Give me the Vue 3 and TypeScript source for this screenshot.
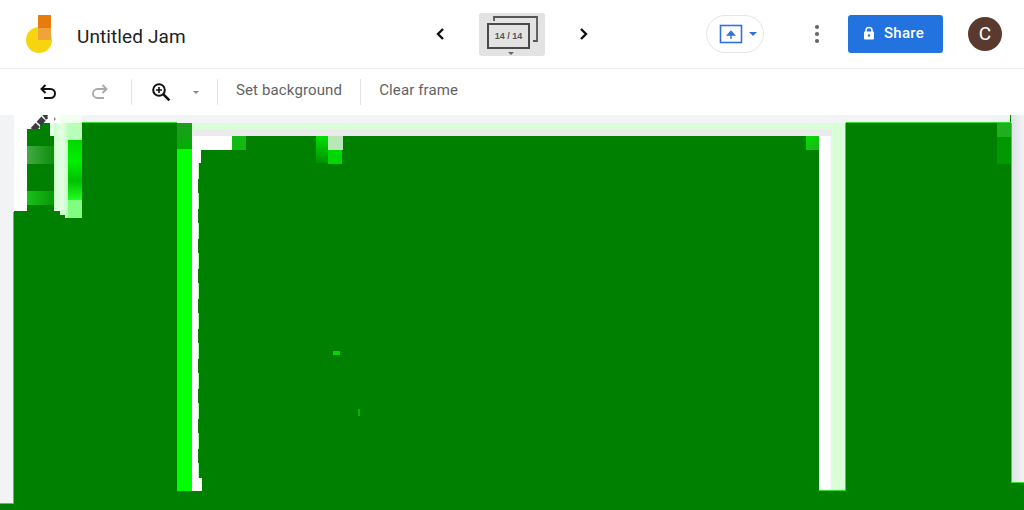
<template>
  <div class="page">
    <header class="topbar">
      <div class="brand">
        <svg class="logo" width="28" height="40" viewBox="0 0 28 40">
          <circle cx="14" cy="26" r="13" fill="#f6d50f" />
          <rect x="13" y="1" width="13" height="13" fill="#e67c0b" />
          <rect x="13" y="14" width="13" height="12" fill="#f0a33a" />
        </svg>
        <span class="title">Untitled Jam</span>
      </div>

      <div class="pager">
        <svg width="12" height="14" viewBox="0 0 12 14">
          <path d="M9 2 4 7l5 5" fill="none" stroke="#111" stroke-width="2.4" />
        </svg>
        <button class="frames">
          <svg class="frames-back" width="52" height="30" viewBox="0 0 52 30">
            <path d="M7 6V2h43v24h-4" fill="none" stroke="#555" stroke-width="1.8" />
          </svg>
          <span class="frames-front">14 / 14</span>
          <span class="frames-caret"></span>
        </button>
        <svg width="12" height="14" viewBox="0 0 12 14">
          <path d="M3 2l5 5-5 5" fill="none" stroke="#111" stroke-width="2.4" />
        </svg>
      </div>

      <div class="actions">
        <button class="present">
          <svg width="24" height="20" viewBox="0 0 24 20">
            <rect x="1.5" y="1.5" width="21" height="17" fill="none" stroke="#2f73d8" stroke-width="1.6" />
            <path d="M12 15V9M8.6 11 12 7.2 15.4 11Z" fill="#2f73d8" stroke="#2f73d8" stroke-width="1.4" />
          </svg>
          <span class="present-caret"></span>
        </button>
        <svg class="more" width="6" height="20" viewBox="0 0 6 20">
          <circle cx="3" cy="3" r="2.1" fill="#666" />
          <circle cx="3" cy="10" r="2.1" fill="#666" />
          <circle cx="3" cy="17" r="2.1" fill="#666" />
        </svg>
        <button class="share">
          <svg width="12" height="14" viewBox="0 0 12 14">
            <path d="M3 6V4.4a3 3 0 0 1 6 0V6" fill="none" stroke="#fff" stroke-width="1.5" />
            <rect x="1" y="5.5" width="10" height="8" rx="1" fill="#fff" />
            <circle cx="6" cy="9.5" r="1.2" fill="#2272e0" />
          </svg>
          <span>Share</span>
        </button>
        <div class="avatar">C</div>
      </div>
    </header>

    <nav class="toolbar">
      <svg class="undo" width="20" height="18" viewBox="0 0 20 18">
        <path d="M6.5 2 2.5 6l4 4M3 6h8.5a4.5 4.5 0 0 1 0 9H5" fill="none" stroke="#111" stroke-width="2" />
      </svg>
      <svg class="redo" width="20" height="18" viewBox="0 0 20 18">
        <path d="M13.5 2l4 4-4 4M17 6H8.5a4.5 4.5 0 0 0 0 9H15" fill="none" stroke="#aaa" stroke-width="1.9" />
      </svg>
      <span class="sep sep-first"></span>
      <svg class="zoom" width="20" height="20" viewBox="0 0 20 20">
        <circle cx="8" cy="8" r="5.8" fill="none" stroke="#111" stroke-width="2" />
        <path d="M12.4 12.4 18.4 18.4" stroke="#111" stroke-width="2.6" />
        <path d="M8 5v6M5 8h6" stroke="#111" stroke-width="1.6" />
      </svg>
      <span class="zoom-caret"></span>
      <span class="sep sep-zoom"></span>
      <span class="tool-text">Set background</span>
      <span class="sep sep-text"></span>
      <span class="tool-text">Clear frame</span>
    </nav>

    <main class="stage">
      <div
        v-for="(b, i) in blocks"
        :key="i"
        class="block"
        :style="blockStyle(b)"
      ></div>
      <svg class="pen" width="26" height="14" viewBox="0 0 26 14">
        <path d="M3 15 16 1" stroke="#3b3b40" stroke-width="6" stroke-dasharray="7 1.5" />
        <path d="M13 0h5l-2 5z" fill="#3b3b40" />
        <path d="M24 2l2 2-2 2z" fill="#888" />
      </svg>
    </main>
  </div>
</template>

<script setup lang="ts">
interface Block {
  x: number
  y: number
  w: number
  h: number
  bg: string
}

const STAGE_TOP = 115
const GREEN = '#008000'
const LIME = '#00ff00'
const EDGE = '#30e030'
const PALE = '#d8ffd8'
const GREY = '#f1f3f4'

// page coordinates, painted in order over the green stage
const blocks: Block[] = [
  // outer grey edges
  { x: 0, y: 115, w: 14, h: 389, bg: GREY },
  { x: 13, y: 212, w: 1, h: 292, bg: EDGE },
  { x: 0, y: 503, w: 14, h: 1, bg: EDGE },
  { x: 14, y: 115, w: 996, h: 8, bg: GREY },
  { x: 82, y: 122, w: 95, h: 1, bg: EDGE },
  { x: 846, y: 122, w: 165, h: 1, bg: EDGE },
  { x: 1011, y: 115, w: 13, h: 367, bg: 'linear-gradient(90deg,#dfe2e6,#f1f3f4)' },
  { x: 1011, y: 123, w: 1, h: 360, bg: EDGE },
  { x: 1011, y: 482, w: 13, h: 1, bg: EDGE },

  // top left white corner with the smeared blocks
  { x: 14, y: 115, w: 46, h: 96, bg: '#fff' },
  { x: 54, y: 123, w: 14, h: 87, bg: 'linear-gradient(90deg,#c8ffc8,#e8ffe8 50%,#c0ffc0)' },
  { x: 60, y: 210, w: 8, h: 5, bg: '#c8ffc8' },
  { x: 65, y: 215, w: 3, h: 3, bg: '#c8ffc8' },
  { x: 60, y: 115, w: 22, h: 8, bg: '#f0fff0' },
  { x: 68, y: 123, w: 14, h: 17, bg: '#b8ffb8' },
  { x: 27, y: 129, w: 27, h: 82, bg: GREEN },
  { x: 40, y: 123, w: 10, h: 6, bg: GREEN },
  { x: 50, y: 123, w: 4, h: 13, bg: '#e8ffe8' },
  { x: 27, y: 146, w: 27, h: 18, bg: 'linear-gradient(90deg,#45a845,#0a900a)' },
  { x: 27, y: 191, w: 27, h: 14, bg: 'linear-gradient(90deg,#18c018,#0a980a)' },
  { x: 68, y: 140, w: 14, h: 60, bg: 'linear-gradient(180deg,#00d800,#00f000 35%,#00c000 68%,#20ff20)' },
  { x: 68, y: 200, w: 14, h: 18, bg: '#80ff80' },

  // frame columns beside the big green area
  { x: 177, y: 123, w: 15, h: 26, bg: 'linear-gradient(180deg,#1f9a1f,#00b000)' },
  { x: 177, y: 149, w: 15, h: 342, bg: LIME },

  // top of the frame
  { x: 192, y: 123, w: 640, h: 7, bg: PALE },
  { x: 192, y: 130, w: 640, h: 6, bg: '#ebebeb' },

  // white frame edges
  { x: 192, y: 136, w: 6, h: 355, bg: '#fff' },
  { x: 198, y: 136, w: 34, h: 14, bg: '#fff' },
  { x: 198, y: 150, w: 3, h: 13, bg: '#fff' },
  { x: 198, y: 163, w: 1, h: 315, bg: 'repeating-linear-gradient(180deg,#b0ffb0 0 16px,#008000 16px 30px)' },
  { x: 198, y: 478, w: 4, h: 13, bg: '#fff' },
  { x: 819, y: 136, w: 13, h: 355, bg: 'linear-gradient(90deg,#fff 80%,#ececec)' },
  { x: 832, y: 123, w: 14, h: 368, bg: PALE },
  { x: 845, y: 123, w: 1, h: 368, bg: EDGE },
  { x: 819, y: 490, w: 27, h: 1, bg: EDGE },

  // smears along the top of the frame
  { x: 232, y: 136, w: 14, h: 14, bg: '#14b814' },
  { x: 316, y: 136, w: 14, h: 27, bg: 'linear-gradient(180deg,#00e000,#009000)' },
  { x: 328, y: 136, w: 15, h: 14, bg: '#b8e8b8' },
  { x: 328, y: 150, w: 14, h: 14, bg: '#00d800' },
  { x: 806, y: 136, w: 13, h: 14, bg: 'linear-gradient(135deg,#00e000,#20b020)' },
  { x: 997, y: 123, w: 14, h: 14, bg: '#1fae1f' },
  { x: 997, y: 137, w: 14, h: 27, bg: '#009a00' },

  // specks inside the green
  { x: 333, y: 351, w: 7, h: 4, bg: '#00d800' },
  { x: 358, y: 409, w: 2, h: 7, bg: '#00b800' },
]

function blockStyle(b: Block) {
  return {
    left: `${b.x}px`,
    top: `${b.y - STAGE_TOP}px`,
    width: `${b.w}px`,
    height: `${b.h}px`,
    background: b.bg,
  }
}
</script>

<style>
html,
body {
  margin: 0;
  background: #fff;
  overflow: hidden;
}
</style>

<style scoped>
.page {
  width: 1024px;
  height: 510px;
  display: flex;
  flex-direction: column;
  font-family: Roboto, "Liberation Sans", sans-serif;
}

.topbar {
  height: 68px;
  display: flex;
  align-items: center;
  border-bottom: 1px solid #ececec;
  background: #fff;
  flex: none;
}

.brand {
  width: 434px;
  padding-left: 25px;
  box-sizing: border-box;
  display: flex;
  align-items: center;
  gap: 24px;
}

.title {
  font-size: 19px;
  letter-spacing: 0.1px;
  padding-top: 5px;
  color: #202124;
}

.pager {
  display: flex;
  align-items: center;
  gap: 33px;
  width: 272px;
}

.frames {
  position: relative;
  width: 66px;
  height: 43px;
  padding: 0;
  border: 0;
  border-radius: 3px;
  background: #e3e3e3;
}

.frames-back {
  position: absolute;
  left: 8px;
  top: 2px;
}

.frames-front {
  position: absolute;
  left: 8px;
  top: 10px;
  width: 39px;
  height: 22px;
  border: 2px solid #4a4a4a;
  background: #e3e3e3;
  font-size: 9px;
  font-weight: 700;
  line-height: 22px;
  text-align: center;
  color: #555;
}

.frames-caret {
  position: absolute;
  left: 29px;
  bottom: 1px;
  border: 3px solid transparent;
  border-top-color: #666;
  border-bottom: 0;
}

.actions {
  display: flex;
  align-items: center;
}

.present {
  width: 58px;
  height: 38px;
  padding: 0 0 0 12px;
  box-sizing: border-box;
  display: flex;
  align-items: center;
  gap: 6px;
  border: 1px solid #e6e6e6;
  border-radius: 19px;
  background: #fff;
}

.present-caret {
  border: 4px solid transparent;
  border-top-color: #2f73d8;
  border-bottom: 0;
}

.more {
  margin-left: 50px;
}

.share {
  width: 95px;
  height: 38px;
  margin-left: 28px;
  display: flex;
  align-items: center;
  justify-content: center;
  gap: 9px;
  padding: 0 4px 2px 0;
  border: 0;
  border-radius: 3px;
  background: #2272e0;
  color: #fff;
  font-family: inherit;
  font-size: 15px;
  font-weight: 500;
  letter-spacing: 0.3px;
}

.avatar {
  width: 34px;
  height: 34px;
  margin-left: 25px;
  border-radius: 50%;
  background: #5a3a2e;
  color: #fff;
  font-size: 19px;
  line-height: 34px;
  text-align: center;
}

.toolbar {
  height: 46px;
  display: flex;
  align-items: center;
  background: #fff;
  flex: none;
}

.undo {
  margin-left: 39px;
}

.redo {
  margin-left: 30px;
}

.sep {
  width: 1px;
  height: 26px;
  background: #e4e4e4;
}

.sep-first {
  margin-left: 22px;
}

.zoom {
  margin-left: 19px;
}

.zoom-caret {
  margin-left: 22px;
  border: 3px solid transparent;
  border-top-color: #888;
  border-bottom: 0;
}

.sep-zoom {
  margin-left: 18px;
  margin-right: 18px;
}

.sep-text {
  margin-left: 18px;
  margin-right: 18px;
}

.tool-text {
  font-size: 15px;
  margin-bottom: 4px;
  color: #5f6368;
  letter-spacing: 0.13px;
}

.stage {
  position: relative;
  flex: 1;
  background: #008000;
  overflow: hidden;
}

.block {
  position: absolute;
}

.pen {
  position: absolute;
  left: 30px;
  top: 0;
}
</style>
